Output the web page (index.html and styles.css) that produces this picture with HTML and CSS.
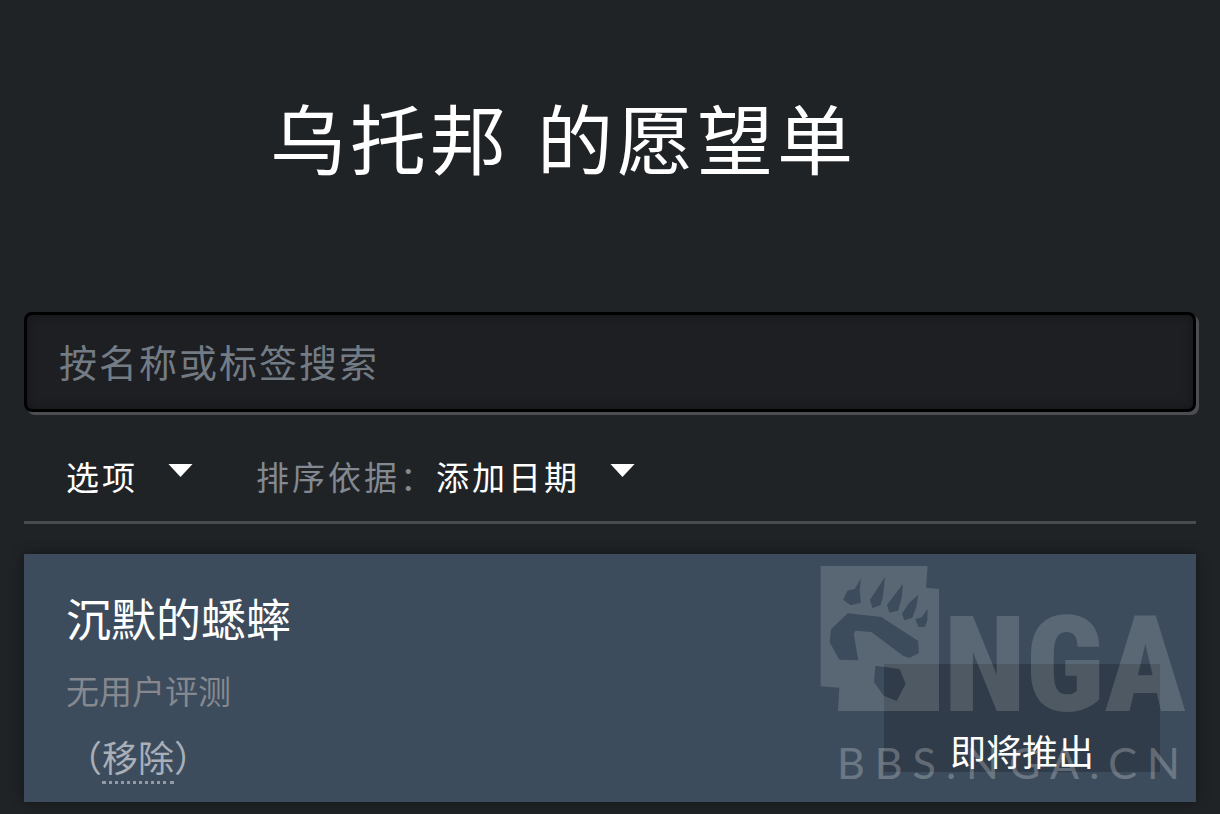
FILE: index.html
```html
<!DOCTYPE html>
<html lang="zh-CN">
<head>
<meta charset="UTF-8">
<meta name="viewport" content="width=device-width, initial-scale=1">
<title>乌托邦 的愿望单</title>
<link rel="stylesheet" href="styles.css">
</head>
<body>

<header class="header">
  <h1><span class="owner">乌托邦</span> 的愿望单</h1>
</header>

<main class="wishlist">
  <input class="search" type="text" placeholder="按名称或标签搜索" aria-label="按名称或标签搜索">

  <div class="filters">
    <button class="options" type="button">
      选项
      <svg class="arrow" viewBox="0 0 26 14"><path d="M0 0H26L13 14Z"/></svg>
    </button>
    <div class="sort">
      <label for="sort">排序依据：</label>
      <select id="sort">
        <option>添加日期</option>
      </select>
      <svg class="arrow" viewBox="0 0 26 14"><path d="M0 0H26L13 14Z"/></svg>
    </div>
  </div>

  <article class="game">
    <div class="info">
      <h2>沉默的蟋蟀</h2>
      <p class="reviews">无用户评测</p>
      <p class="remove">（<a href="#">移除</a>）</p>
    </div>
    <div class="release">即将推出</div>

    <svg class="watermark" viewBox="0 0 396 248">
      <g transform="scale(.33333) translate(0 -12)" opacity=".15">
        <path fill-rule="evenodd" d="M62 48H383L378 113L417 117V483H114L118 413L62 409Z
          M183 85L164 117L142 122L129 149L152 166L183 158L179 123Z
          M255 81L210 149L217 175L242 165L249 138Z
          M309 101L261 165L268 188L294 182L305 144Z
          M355 134L328 158L306 191L313 211L337 203L349 171Z
          M383 176L366 201L346 208L355 231H375L382 211Z
          M143 190L244 201L354 272L357 309L328 324L309 317L214 246L167 242L161 252L175 331L118 329L89 277L93 238Z
          M226 347L299 357L317 402L290 453L251 437L222 396Z"/>
      </g>
      <text class="brand" x="144" y="157">NGA</text>
      <text class="site" x="37" y="225">BBS.NGA.CN</text>
    </svg>
  </article>
</main>

</body>
</html>
```

FILE: styles.css
```css
* {
  box-sizing: border-box;
}

body {
  margin: 0;
  background: #202326;
  color: #fff;
  font-family: "Noto Sans CJK SC", sans-serif;
}

h1, h2, p {
  margin: 0;
  font-weight: 400;
}

.header {
  padding: 80px 24px 176px 270px;
}

.header h1 {
  font-size: 76px;
  line-height: 112px;
  height: 56px;
  letter-spacing: 4px;
  white-space: nowrap;
}

.owner {
  margin-right: 6px;
}

.wishlist {
  padding: 0 24px 12px;
}

.search {
  display: block;
  width: 100%;
  height: 100px;
  padding: 0 32px 4px;
  border: 3px solid #000;
  border-radius: 8px;
  background: #1e1f23;
  box-shadow: 3px 3px 0 #4c4d50, inset 0 0 12px rgba(0, 0, 0, .3);
  color: #fff;
  font: inherit;
  font-size: 38px;
  letter-spacing: 2px;
}

.search::placeholder {
  color: #737c85;
  opacity: 1;
}

.filters {
  display: flex;
  align-items: center;
  gap: 63px;
  height: 112px;
  padding: 18px 42px 0;
  border-bottom: 3px solid #494b4f;
  font-size: 33px;
  letter-spacing: 3px;
}

.filters button,
.filters select {
  margin: 0;
  padding: 0;
  border: 0;
  background: none;
  color: #fff;
  font: inherit;
  letter-spacing: inherit;
  appearance: none;
}

.options,
.sort {
  display: flex;
  align-items: center;
}

.sort label {
  color: #838992;
}

.filters .arrow {
  width: 25px;
  height: 13px;
  margin: 0 0 10px 30px;
  fill: #fff;
}

.game {
  position: relative;
  display: flex;
  justify-content: space-between;
  align-items: flex-end;
  height: 248px;
  margin-top: 30px;
  padding: 0 36px 0 42px;
  background: #3d4c5c;
  box-shadow: 0 0 12px rgba(0, 0, 0, .4);
}

.info {
  align-self: flex-start;
  padding-top: 30px;
}

.info h2 {
  font-size: 45px;
  line-height: 68px;
}

.reviews {
  padding-top: 12px;
  color: #85898f;
  font-size: 33px;
  line-height: 52px;
}

.remove {
  padding-top: 12px;
  color: #a9afb9;
  font-size: 36px;
  line-height: 56px;
}

.remove a {
  display: inline-block;
  height: 56px;
  border-bottom: 3px dotted #939aa5;
  color: inherit;
  text-decoration: none;
}

.release {
  width: 276px;
  height: 108px;
  margin-bottom: 30px;
  padding-top: 66px;
  background: rgba(0, 0, 0, .2);
  font-size: 36px;
  line-height: 40px;
  text-align: center;
}

/* site mark lies over the game row */
.watermark {
  position: absolute;
  right: 0;
  bottom: 0;
  width: 396px;
  height: 248px;
  fill: #fff;
  pointer-events: none;
}

.brand {
  font: 900 134px "Noto Sans ExtraCondensed", "Roboto Condensed", "Liberation Sans", sans-serif;
  opacity: .15;
}

.site {
  font: 43px Lato, sans-serif;
  letter-spacing: 10px;
  opacity: .24;
}
```
